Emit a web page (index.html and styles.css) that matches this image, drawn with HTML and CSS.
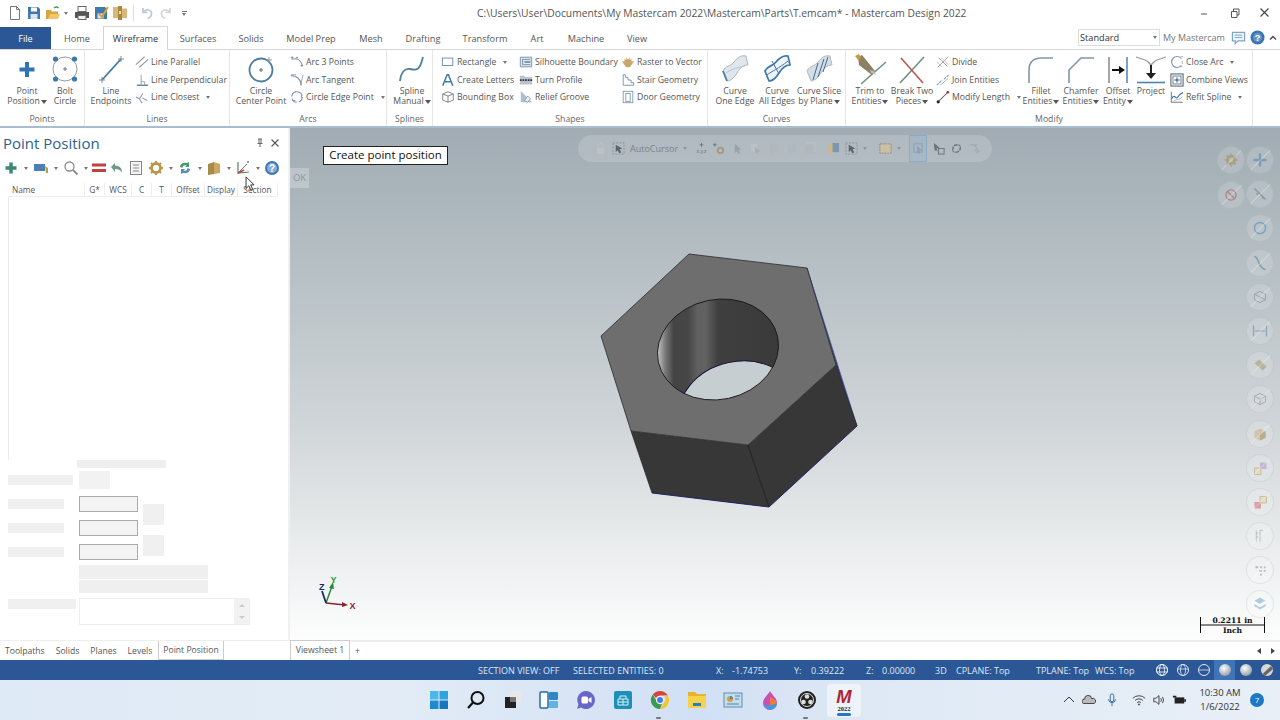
FILE: index.html
```html
<!DOCTYPE html>
<html>
<head>
  <meta charset="UTF-8">
  <title>Mastercam Design 2022</title>
  <link rel="stylesheet" href="styles.css">
</head>
<body>
  <div class="app">

    <!-- Title bar -->
    <header class="titlebar">
      <div class="qat">
        <svg class="qi" viewBox="0 0 16 16"><path d="M3.500 1.500h6l3 3v10h-9z" fill="#fff" stroke="#777"/><path d="M9.500 1.500v3h3" fill="none" stroke="#777"/></svg>
        <svg class="qi" viewBox="0 0 16 16"><path d="M2 2h10l2 2v10H2z" fill="#3f79ad"/><rect x="5" y="2.500" width="6" height="4" fill="#fff"/><rect x="4.500" y="9" width="7" height="5" fill="#dbe6ef"/></svg>
        <span class="qi-wide"><svg class="qi" viewBox="0 0 16 16"><path d="M1 5h5l1 1.500h6V14H1z" fill="#d9a441"/><path d="M3 14l2-5h10l-2 5z" fill="#efc66c"/><path d="M9 3c2-1.500 3.500-1 4.500 0" fill="none" stroke="#4c9a5a" stroke-width="1.500"/></svg><i class="caret"></i></span>
        <svg class="qi" viewBox="0 0 16 16"><rect x="4" y="1.500" width="8" height="5" fill="#fff" stroke="#666"/><path d="M1 7h14v6H1z" fill="#555"/><rect x="4" y="10.500" width="8" height="4" fill="#eee" stroke="#666"/></svg>
        <svg class="qi" viewBox="0 0 16 16"><path d="M2 2h10l2 2v10H2z" fill="#3f79ad"/><rect x="4.500" y="8.500" width="6" height="5" fill="#dbe6ef"/><path d="M6 9l3 3 6-10" fill="none" stroke="#d8a23a" stroke-width="2"/></svg>
        <svg class="qi" viewBox="0 0 16 16"><path d="M1 2h5l1 1.500h8V13H1z" fill="#d8b878"/><rect x="6" y="1" width="4" height="14" fill="#a8863f"/><rect x="7" y="6" width="2" height="3" fill="#f3e4bf"/></svg>
        <i class="qsep"></i>
        <svg class="qi" viewBox="0 0 16 16"><path d="M4 3v4.500h4.500M4.500 7C7 3.500 13 4.500 12.500 9c-.3 2.500-2 4-4 4.500" fill="none" stroke="#b9c9d8" stroke-width="1.700"/></svg>
        <svg class="qi" viewBox="0 0 16 16"><path d="M12 3v4.500H7.500M11.500 7C9 3.500 3 4.500 3.500 9c.3 2.500 2 4 4 4.500" fill="none" stroke="#d5d5d5" stroke-width="1.700"/></svg>
        <span class="qi-more"><b></b><i class="caret"></i></span>
      </div>
      <div class="doc-title">C:\Users\User\Documents\My Mastercam 2022\Mastercam\Parts\T.emcam* - Mastercam Design 2022</div>
      <div class="winbtns">
        <svg viewBox="0 0 12 12"><path d="M2 7h6" stroke="#555"/></svg>
        <svg viewBox="0 0 12 12"><path d="M2.500 4.500h5.500v6h-5.500zM4.500 4.500v-2.500h5.500v6h-2" fill="none" stroke="#555"/></svg>
        <svg viewBox="0 0 12 12"><path d="M1.500 1.500l8 8M9.500 1.500l-8 8" stroke="#444" stroke-width="1.100"/></svg>
      </div>
    </header>

    <!-- Ribbon tabs -->
    <nav class="tabs">
      <span class="tab-file">File</span>
      <span class="tab t-home">Home</span>
      <span class="tab tab-active">Wireframe</span>
      <span class="tab t-surfaces">Surfaces</span>
      <span class="tab t-solids">Solids</span>
      <span class="tab t-prep">Model Prep</span>
      <span class="tab t-mesh">Mesh</span>
      <span class="tab t-drafting">Drafting</span>
      <span class="tab t-transform">Transform</span>
      <span class="tab t-art">Art</span>
      <span class="tab t-machine">Machine</span>
      <span class="tab t-view">View</span>
      <div class="tabs-right">
        <div class="combo">Standard<i class="caret"></i></div>
        <span class="my-mc">My Mastercam</span>
        <svg class="tr-ic" viewBox="0 0 16 16"><path d="M1.500 2.500h13v9h-7l-3 3v-3h-3z" fill="#eef3f8" stroke="#7ea6c8" stroke-width="1.300"/><path d="M4 5.500h8M4 8h8" stroke="#7ea6c8"/></svg>
        <svg class="tr-ic" viewBox="0 0 16 16"><circle cx="8" cy="8" r="7.500" fill="#3d73ad"/><circle cx="8" cy="8" r="5" fill="#5f93c6"/><text x="8" y="11.500" class="help-q">?</text></svg>
        <svg class="tr-chev" viewBox="0 0 10 10"><path d="M2 6.500l3-3 3 3" fill="none" stroke="#444" stroke-width="1.300"/></svg>
      </div>
    </nav>

    <!-- Ribbon -->
    <section class="ribbon">
      <div class="rgroup g-points">
        <div class="rbody">
          <div class="big w42">
            <svg viewBox="0 0 36 32"><path d="M18 9v15M10.500 16.500h15" stroke="#2f75b5" stroke-width="4"/></svg>
            <span>Point<br>Position<i class="caret-big"></i></span>
          </div>
          <div class="big w30">
            <svg viewBox="0 0 36 32"><circle cx="18" cy="16" r="12" fill="none" stroke="#999"/><path d="M16 16h4M18 14v4" stroke="#777"/><circle cx="8.500" cy="6" r="2.600" fill="#3d78ad"/><circle cx="27.500" cy="6" r="2.600" fill="#3d78ad"/><circle cx="8.500" cy="26" r="2.600" fill="#3d78ad"/><circle cx="27.500" cy="26" r="2.600" fill="#3d78ad"/></svg>
            <span>Bolt<br>Circle</span>
          </div>
        </div>
        <div class="rlabel">Points</div>
      </div>

      <div class="rgroup g-lines">
        <div class="rbody">
          <div class="big w48">
            <svg viewBox="0 0 36 32"><path d="M9 27L28 6" stroke="#3f78a8" stroke-width="1.800"/><path d="M9 24v6M6 27h6M28 3v6M25 6h6" stroke="#888"/></svg>
            <span>Line<br>Endpoints</span>
          </div>
          <div class="col">
            <div class="small"><svg viewBox="0 0 16 16"><path d="M1 11L11 2M5 14L15 5" stroke="#8a9aa8" stroke-width="1.200"/></svg>Line Parallel</div>
            <div class="small"><svg viewBox="0 0 16 16"><path d="M2 14h13" stroke="#4c7fa8" stroke-width="1.500"/><path d="M7 2v12M7 10h4v4" fill="none" stroke="#999"/></svg>Line Perpendicular</div>
            <div class="small"><svg viewBox="0 0 16 16"><path d="M1 8l4 2 4-6M5 10l3 5M8 9l6 3" fill="none" stroke="#8a9aa8" stroke-width="1.200"/></svg>Line Closest<i class="caret"></i></div>
          </div>
        </div>
        <div class="rlabel">Lines</div>
      </div>

      <div class="rgroup g-arcs">
        <div class="rbody">
          <div class="big w56">
            <svg viewBox="0 0 36 32"><circle cx="18" cy="17" r="11.500" fill="none" stroke="#4f7f9f" stroke-width="1.800"/><path d="M16 17h4M18 15v4" stroke="#666"/><path d="M26 4v6M23 7h6" stroke="#999"/></svg>
            <span>Circle<br>Center Point</span>
          </div>
          <div class="col">
            <div class="small"><svg viewBox="0 0 16 16"><path d="M2 5c5-2 10 0 12 6" fill="none" stroke="#7b97ad" stroke-width="1.200"/><path d="M1 3h3M2.500 1.500v3M7 3h2M8 2v2M12 12h3M13.500 10.500v3" stroke="#888"/></svg>Arc 3 Points</div>
            <div class="small"><svg viewBox="0 0 16 16"><path d="M1 3c7 0 11 4 12 11" fill="none" stroke="#7b97ad" stroke-width="1.300"/><path d="M15 2l-3 12M1 2h6" stroke="#999"/></svg>Arc Tangent</div>
            <div class="small"><svg viewBox="0 0 16 16"><circle cx="8" cy="8" r="6" fill="none" stroke="#7b97ad" stroke-dasharray="7 2.500" stroke-width="1.300"/><path d="M6 2h3M13 6v3M3 12h3" stroke="#888"/></svg>Circle Edge Point<i class="caret"></i></div>
          </div>
        </div>
        <div class="rlabel">Arcs</div>
      </div>

      <div class="rgroup g-splines">
        <div class="rbody">
          <div class="big w42">
            <svg viewBox="0 0 36 32"><path d="M6 28c1-9 5-13 10-12s8 1 10-3 2-6 3-9" fill="none" stroke="#4f7f9f" stroke-width="1.800"/></svg>
            <span>Spline<br>Manual<i class="caret-big"></i></span>
          </div>
        </div>
        <div class="rlabel">Splines</div>
      </div>

      <div class="rgroup g-shapes">
        <div class="rbody">
          <div class="col c78">
            <div class="small"><svg viewBox="0 0 16 16"><rect x="1.500" y="3.500" width="12" height="8.500" fill="#fff" stroke="#5f86a6"/></svg>Rectangle<i class="caret"></i></div>
            <div class="small"><svg viewBox="0 0 16 16"><path d="M2 14.500L7 2h1.500l5 12.500M4 10h7" fill="none" stroke="#3f78a8" stroke-width="1.700"/></svg>Create Letters</div>
            <div class="small"><svg viewBox="0 0 16 16"><path d="M8 2l6 2.500v7L8 14l-6-2.500v-7zM2 4.500L8 7l6-2.500M8 7v7" fill="none" stroke="#777"/></svg>Bounding Box</div>
          </div>
          <div class="col c102">
            <div class="small"><svg viewBox="0 0 16 16"><path d="M1.500 2.500h13v11h-13z" fill="#dfe7ee" stroke="#6f8da5"/><path d="M13 5H4v6h9M13 7.500H6.500v1H13" fill="none" stroke="#6f8da5"/></svg>Silhouette Boundary</div>
            <div class="small"><svg viewBox="0 0 16 16"><path d="M1 3h5l1 1.500h8V13H1z" fill="#b9c4cc"/><path d="M1 8h14" stroke="#333" stroke-width="2" stroke-dasharray="2 1"/></svg>Turn Profile</div>
            <div class="small"><svg viewBox="0 0 16 16"><path d="M2 1v13h13z" fill="#aebfcd"/><path d="M6 12l4-5 3 3-3 4z" fill="#eef2f5" stroke="#7f95a8"/></svg>Relief Groove</div>
          </div>
          <div class="col">
            <div class="small"><svg viewBox="0 0 16 16"><path d="M3 10l-2-3 3 .5V4l2 2V2.500l2 3 2-3V6l2-2v3.500l3-.5-2 3-3 4H6z" fill="#c9a66b"/></svg>Raster to Vector</div>
            <div class="small"><svg viewBox="0 0 16 16"><path d="M2.500 2v12h12v-3h-3V8H8V5H5V2z" fill="#fff" stroke="#6f8da5"/></svg>Stair Geometry</div>
            <div class="small"><svg viewBox="0 0 16 16"><rect x="2.500" y="1.500" width="11" height="13" fill="#fff" stroke="#7a98ad"/><rect x="5.500" y="4" width="5" height="9" fill="none" stroke="#7a98ad"/></svg>Door Geometry</div>
          </div>
        </div>
        <div class="rlabel">Shapes</div>
      </div>

      <div class="rgroup g-curves">
        <div class="rbody">
          <div class="big w42">
            <svg viewBox="0 0 36 32"><path d="M6 18c3-6 7-4 11-9s7-7 12-6l2 9c-5 0-8 3-11 8s-7 8-10 8z" fill="#dfe6ec" stroke="#a9b7c2"/><path d="M6 18l4 10" stroke="#4f84ad" stroke-width="2"/><path d="M9 20c4-3 9-5 19-7" stroke="#b9c5ce" fill="none"/></svg>
            <span>Curve<br>One Edge</span>
          </div>
          <div class="big w42">
            <svg viewBox="0 0 36 32"><path d="M6 18c3-6 7-4 11-9s7-7 12-6l2 9c-5 0-8 3-11 8s-7 8-10 8z" fill="#eef3f7" stroke="#3f78a8" stroke-width="1.700"/><path d="M8 22c5-4 11-6 21-14M13 8l7 13" stroke="#3f78a8" fill="none"/></svg>
            <span>Curve<br>All Edges</span>
          </div>
          <div class="big w42">
            <svg viewBox="0 0 36 32"><path d="M6 18c3-6 7-4 11-9s7-7 12-6l2 9c-5 0-8 3-11 8s-7 8-10 8z" fill="#d5dde3" stroke="#b0bcc5"/><path d="M12 27l5-17M17 24l6-18M22 19l5-15" stroke="#3f6f98"/></svg>
            <span>Curve Slice<br>by Plane<i class="caret-big"></i></span>
          </div>
        </div>
        <div class="rlabel">Curves</div>
      </div>

      <div class="rgroup g-modify">
        <div class="rbody">
          <div class="big w42">
            <svg viewBox="0 0 36 32"><path d="M9 31L34 9" stroke="#6f9182" stroke-width="1.600"/><path d="M6 4l4-2 13 16-3 4-13-10z" fill="#8e8064"/><path d="M3 3l4-2 2 4-3 2z" fill="#c59b4a"/><path d="M18 17l4 1 2 4-5-2z" fill="#bbb"/></svg>
            <span>Trim to<br>Entities<i class="caret-big"></i></span>
          </div>
          <div class="big w42">
            <svg viewBox="0 0 36 32"><path d="M6 30L30 4" stroke="#6f9182" stroke-width="1.600"/><path d="M7 5l22 25" stroke="#c2544e" stroke-width="1.600"/></svg>
            <span>Break Two<br>Pieces<i class="caret-big"></i></span>
          </div>
          <div class="col c84">
            <div class="small"><svg viewBox="0 0 16 16"><path d="M2 14L14 2" stroke="#999"/><path d="M3 3l10 10" stroke="#c08a80"/><path d="M6 3l8 8M1 8l6 6" stroke="#bbb"/></svg>Divide</div>
            <div class="small"><svg viewBox="0 0 16 16"><path d="M1 14l6-6M9 7l6-5" stroke="#6f9aa8" stroke-width="1.200" stroke-dasharray="3 1"/><path d="M5 14l9-8" stroke="#aaa"/></svg>Join Entities</div>
            <div class="small"><svg viewBox="0 0 16 16"><path d="M2 14L14 2" stroke="#555" stroke-width="1.200"/><circle cx="2.500" cy="13.500" r="1.800" fill="#222"/><circle cx="13.500" cy="2.500" r="1.500" fill="#a33"/></svg>Modify Length<i class="caret"></i></div>
          </div>
          <div class="big w40">
            <svg viewBox="0 0 36 32"><path d="M6 30V17C6 9 11 5 19 5h11" fill="none" stroke="#7f98a8" stroke-width="1.600"/></svg>
            <span>Fillet<br>Entities<i class="caret-big"></i></span>
          </div>
          <div class="big w40">
            <svg viewBox="0 0 36 32"><path d="M6 30V17L18 5h13" fill="none" stroke="#7f98a8" stroke-width="1.600"/></svg>
            <span>Chamfer<br>Entities<i class="caret-big"></i></span>
          </div>
          <div class="big w34">
            <svg viewBox="0 0 36 32"><path d="M9 4v26" stroke="#888" stroke-width="1.500"/><path d="M27 4v26" stroke="#4f84ad" stroke-width="1.500"/><path d="M12 17h8" stroke="#111" stroke-width="2"/><path d="M19 13l6 4-6 4z" fill="#111"/></svg>
            <span>Offset<br>Entity<i class="caret-big"></i></span>
          </div>
          <div class="big w32">
            <svg viewBox="0 0 36 32"><path d="M3 4l9 3c3 1 4 3 6 5 2-2 3-4 6-5l9-3" fill="none" stroke="#999" stroke-width="1.300"/><path d="M18 12v11" stroke="#222" stroke-width="2"/><path d="M13 20l5 6 5-6z" fill="#222"/><path d="M4 29.500h28" stroke="#4f84ad" stroke-width="1.600"/></svg>
            <span>Project</span>
          </div>
          <div class="col c-last">
            <div class="small"><svg viewBox="0 0 16 16"><path d="M13 4a6.300 6.300 0 1 0 0 8" fill="none" stroke="#7b97ad" stroke-width="1.300"/><path d="M12 2h3M14 7v3M11 13h3" stroke="#999"/></svg>Close Arc<i class="caret"></i></div>
            <div class="small"><svg viewBox="0 0 16 16"><rect x="1" y="1" width="14" height="14" fill="#dfe9f1" stroke="#555"/><rect x="3.500" y="3.500" width="9" height="9" fill="#fff" stroke="#5f86a6"/><path d="M8 5v6M5 8h6" stroke="#333"/></svg>Combine Views</div>
            <div class="small"><svg viewBox="0 0 16 16"><path d="M1.500 14V2M1.500 14h13" stroke="#666"/><path d="M2 10c3-7 5 2 7-2s3-4 6-5" fill="none" stroke="#3f78a8" stroke-width="1.300"/><path d="M4 13c3-3 6-1 10-5" fill="none" stroke="#aaa"/></svg>Refit Spline<i class="caret"></i></div>
          </div>
        </div>
        <div class="rlabel">Modify</div>
      </div>
    </section>

    <!-- Panel and graphics window -->
    <main class="workspace">
      <aside class="panel">
        <div class="panel-head">
          <h1>Point Position</h1>
          <svg class="ph-ic" viewBox="0 0 10 10"><path d="M3 1h4M4 1v4M6 1v4M2.500 5.500h5M5 5.500V9" fill="none" stroke="#666"/></svg>
          <svg class="ph-ic" viewBox="0 0 10 10"><path d="M1.500 1.500l7 7M8.500 1.500l-7 7" stroke="#555" stroke-width="1.100"/></svg>
        </div>

        <div class="panel-tools">
          <span class="tb"><svg viewBox="0 0 16 16"><path d="M8 2.500v11M2.500 8h11" stroke="#3d8a6f" stroke-width="3.500"/></svg><i class="tb-caret"></i></span>
          <span class="tb"><svg viewBox="0 0 16 16"><path d="M1 4h11v7H1z" fill="#4d7fb5"/><path d="M12 6l3 2v5h-2z" fill="#b9a33a"/></svg><i class="tb-caret"></i></span>
          <span class="tb t28"><svg viewBox="0 0 16 16"><circle cx="6.500" cy="6.500" r="4.500" fill="#fff" stroke="#8a8a8a" stroke-width="1.300"/><path d="M10 10l4.500 4.500" stroke="#8a8a8a" stroke-width="1.800"/></svg><i class="tb-caret"></i></span>
          <span class="tb t18"><svg viewBox="0 0 16 16"><path d="M1 5h14M1 10.500h14" stroke="#c0413e" stroke-width="2.800"/></svg></span>
          <span class="tb t19"><svg viewBox="0 0 16 16"><path d="M2 7l4-4v2.500c5 0 7 3 7 7-2-3-4-3.500-7-3.500V12z" fill="#6f9a8a"/></svg></span>
          <span class="tb t20"><svg viewBox="0 0 16 16"><rect x="2.500" y="1.500" width="11" height="13" fill="#f4f4f4" stroke="#888"/><path d="M5 5h6M5 8h6M5 11h6" stroke="#888"/></svg></span>
          <span class="tb t29"><svg viewBox="0 0 16 16"><circle cx="8" cy="8" r="4.500" fill="none" stroke="#b9974a" stroke-width="2.800"/><path d="M8 1v2M8 13v2M1 8h2M13 8h2M3 3l1.500 1.500M13 13l-1.500-1.500M13 3l-1.500 1.500M3 13l1.500-1.500" stroke="#b9974a" stroke-width="2"/></svg><i class="tb-caret"></i></span>
          <span class="tb t29"><svg viewBox="0 0 16 16"><path d="M3 7c0-3 3-5 7-4l2-1v5H8l1.500-1.500C7 5 5.500 6 5.500 8z" fill="#4c9a6a"/><path d="M13 9c0 3-3 5-7 4l-2 1V9h4l-1.500 1.500c2.500.5 4-.5 4-2.500z" fill="#5f8db5"/></svg><i class="tb-caret"></i></span>
          <span class="tb t29"><svg viewBox="0 0 16 16"><path d="M2 4l6-2v12l-6 1z" fill="#a88a4a"/><path d="M8 2l6 2v9l-6 1z" fill="#c9a961"/></svg><i class="tb-caret"></i></span>
          <span class="tb t29"><svg viewBox="0 0 16 16"><path d="M3 2v11l11-1" fill="none" stroke="#5f8068" stroke-width="1.200"/><path d="M3 13l9-9" stroke="#777"/><path d="M3 13l6-3" stroke="#c0413e" stroke-width="1.400"/><path d="M12 2h2M13 1v2" stroke="#777"/></svg><i class="tb-caret"></i></span>
          <span class="tb t16"><svg viewBox="0 0 16 16"><circle cx="8" cy="8" r="7" fill="#4078b5"/><circle cx="8" cy="8" r="5" fill="#86b0d8"/><text x="8" y="11.500" class="help-q">?</text></svg></span>
        </div>

        <div class="grid-head">
          <span class="gh-name">Name</span><span class="gh-g">G*</span><span class="gh-wcs">WCS</span><span class="gh-c">C</span><span class="gh-t">T</span><span class="gh-offset">Offset</span><span class="gh-display">Display</span><span class="gh-section">Section</span>
        </div>
        <div class="grid-body"></div>

        <!-- Form rows: captured mid-fade, so the content shows as blank boxes -->
        <div class="fade-form">
          <div class="ff-title"></div>
          <div class="ff-row ff-first">
            <div class="ff-label ff-l65"></div>
            <div class="ff-box"></div>
          </div>
          <div class="ff-fields">
            <div class="ff-col">
              <div class="ff-row"><div class="ff-label"></div><div class="ff-input"></div></div>
              <div class="ff-row"><div class="ff-label"></div><div class="ff-input"></div></div>
              <div class="ff-row"><div class="ff-label"></div><div class="ff-input"></div></div>
            </div>
            <div class="ff-squares"><div class="ff-sq"></div><div class="ff-sq"></div></div>
          </div>
          <div class="ff-bars"><div></div><div></div></div>
          <div class="ff-row ff-note">
            <div class="ff-label ff-l68"></div>
            <div class="ff-text">
              <div class="ff-scroll"><i class="up"></i><i class="down"></i></div>
            </div>
          </div>
        </div>

        <svg class="cursor" viewBox="0 0 12 18"><path d="M1 1v13l3.200-3 2.300 5 2-1-2.300-5H10z" fill="#fff" stroke="#222"/></svg>
      </aside>

      <div class="viewport">
        <svg class="nut" viewBox="290 128 990 512">
          <defs>
            <clipPath id="hole"><ellipse cx="718" cy="349.500" rx="61" ry="50" transform="rotate(-12 718 349.500)"/></clipPath>
            <linearGradient id="wall" gradientUnits="userSpaceOnUse" x1="658" y1="0" x2="778" y2="0">
              <stop offset="0" stop-color="#c0c0c0"/>
              <stop offset=".06" stop-color="#7a7a7a"/>
              <stop offset=".13" stop-color="#444"/>
              <stop offset=".25" stop-color="#474747"/>
              <stop offset=".33" stop-color="#606060"/>
              <stop offset=".4" stop-color="#616161"/>
              <stop offset=".5" stop-color="#3f3f3f"/>
              <stop offset="1" stop-color="#3a3a3a"/>
            </linearGradient>
          </defs>
          <path d="M807 268L857 426 836 365z" fill="#2e2e3c" stroke="#5060b0" stroke-width=".8"/>
          <path d="M748 445L836 365 857 426 769 507z" fill="#373737"/>
          <path d="M631 431L748 445 769 507 652 493z" fill="#373737"/>
          <path d="M689 254L807 268 836 365 748 445 631 431 601 336z" fill="#6e6e6e" stroke="#2a2a2a" stroke-width=".8"/>
          <path d="M748 445L769 507" stroke="#111" stroke-width=".8"/>
          <path d="M652 493L769 507 857 426" fill="none" stroke="#22226a" stroke-width="1"/>
          <path d="M631 431L652 493M836 365L857 426" fill="none" stroke="#222" stroke-width=".7"/>
          <g clip-path="url(#hole)">
            <rect x="650" y="290" width="140" height="120" fill="url(#wall)"/>
            <ellipse cx="739" cy="411.500" rx="61" ry="50" transform="rotate(-12 739 411.500)" fill="#c7ced2" stroke="#1a1a3a"/>
          </g>
          <ellipse cx="718" cy="349.500" rx="61" ry="50" transform="rotate(-12 718 349.500)" fill="none" stroke="#1a1a1a" stroke-width=".9"/>
          <!-- Axis triad -->
          <path d="M326 603L345 605" stroke="#8a2030" stroke-width="1.500"/>
          <path d="M342 602l6 3-6 2z" fill="#8a2030"/>
          <path d="M326 603L332 586" stroke="#2a8a3a" stroke-width="1.500"/>
          <path d="M329 588l4-6 1 7z" fill="#2a8a3a"/>
          <path d="M326 603L322 591" stroke="#1a2a6a" stroke-width="1.800"/>
          <text x="349.500" y="609" class="ax ax-x">X</text>
          <text x="330.500" y="583" class="ax ax-y">Y</text>
          <text x="319" y="590" class="ax ax-z">Z</text>
          <!-- Scale -->
          <path d="M1200.500 617v16M1264.500 617v16M1200 625h65" stroke="#111" fill="none"/>
          <text x="1232.500" y="623" class="scale-text">0.2211 in</text>
          <text x="1232.500" y="632.500" class="scale-text">Inch</text>
        </svg>

        <div class="tooltip">Create point position</div>
        <div class="ok-btn">OK</div>

        <div class="autocursor">
          <svg viewBox="0 0 14 14"><rect x="3" y="6" width="8" height="7" fill="#bcc3c8"/><path d="M4.500 6V4a2.500 2.500 0 0 1 5 0v2" fill="none" stroke="#bcc3c8"/></svg>
          <svg viewBox="0 0 14 14"><path d="M1 1h12v12H1z" fill="none" stroke="#8a9298" stroke-dasharray="2 1.500"/><path d="M4 3l7 4-3 1 2 3-2 1-2-3-2 2z" fill="#5c6369"/></svg>
          <span>AutoCursor</span><i class="caret"></i>
          <svg viewBox="0 0 14 14"><text x="7" y="12" class="ac-xyz">x.y.z</text><path d="M7 1v4M5 3h4" stroke="#6a7278"/></svg>
          <svg viewBox="0 0 14 14"><circle cx="8" cy="9" r="3" fill="none" stroke="#a89878" stroke-width="2"/><path d="M2 1v4M0 3h4" stroke="#6a7278"/></svg>
          <svg viewBox="0 0 14 14"><path d="M4 2l7 6-3 1 2 3-2 1-2-3-2 2z" fill="#9aa3a9"/></svg>
          <svg viewBox="0 0 14 14"><rect x="2" y="2" width="7" height="8" fill="#bcc3c8"/><path d="M6 5l6 5-3 1 1 2-2-1-1 1z" fill="#a8b0b6"/></svg>
          <svg viewBox="0 0 14 14"><path d="M3 2h4v10H3zM8 4h3v6H8z" fill="#b0b8be"/></svg>
          <svg viewBox="0 0 14 14"><path d="M3 4h4v8H3zM8 2h3v8H8z" fill="#b0b8be"/></svg>
          <svg viewBox="0 0 14 14"><rect x="2" y="3" width="9" height="9" fill="#b0b8be"/><path d="M4 3V1h9v9h-2" fill="none" stroke="#bcc3c8"/></svg>
          <svg class="ac-globe" viewBox="0 0 14 14"><rect x="1" y="3" width="7" height="9" fill="#c9b88f"/><rect x="6" y="1" width="7" height="10" fill="#7d97b0"/></svg>
          <svg viewBox="0 0 14 14"><path d="M1 1h12v12H1z" fill="none" stroke="#8a9298" stroke-dasharray="2 1.500"/><path d="M4 3l7 4-3 1 2 3-2 1-2-3-2 2z" fill="#5c6369"/></svg><i class="caret"></i>
          <svg class="ac-wide" viewBox="0 0 14 14"><rect x="1" y="2" width="12" height="10" fill="#c9c1a5" stroke="#8f8a78" stroke-dasharray="2 1"/></svg><i class="caret"></i>
          <span class="ac-active"><svg viewBox="0 0 14 14"><rect x="2" y="2" width="9" height="9" fill="none" stroke="#8fa0ae"/><path d="M5 4l6 5-3 1 1 3-2-1-1 1z" fill="#8fa0ae"/></svg></span>
          <svg viewBox="0 0 14 14"><path d="M2 1l6 5-3 1 1 3-2-1-1 1z" fill="#6a7278"/><rect x="7" y="7" width="6" height="6" fill="none" stroke="#6a7278"/></svg>
          <svg viewBox="0 0 14 14"><path d="M3 9a5 5 0 0 1 8-5M11 5a5 5 0 0 1-8 5" fill="none" stroke="#6a7278" stroke-width="1.500" stroke-dasharray="4 1"/></svg>
          <svg viewBox="0 0 14 14"><path d="M2 3h8M7 3l5 8M7 8l3 4" stroke="#a2aab0" stroke-width="1.300" fill="none"/></svg>
        </div>

        <!-- Right-hand quick mask buttons -->
        <div class="rail">
          <div class="rail-top">
            <span class="mask"><svg viewBox="0 0 28 28"><circle cx="14" cy="14" r="4" fill="none" stroke="#a89060" stroke-width="3"/><path d="M14 7v2M14 19v2M7 14h2M19 14h2M9 9l1.500 1.500M19 19l-1.500-1.500M19 9l-1.500 1.500M9 19l1.500-1.500" stroke="#a89060" stroke-width="1.500"/></svg></span>
            <span class="mask"><svg viewBox="0 0 28 28"><circle cx="14" cy="14" r="5.500" fill="none" stroke="#b06a6a" stroke-width="1.500"/><path d="M10 10l8 8" stroke="#b06a6a" stroke-width="1.500"/></svg></span>
          </div>
          <div class="rail-main">
            <span class="mask"><svg viewBox="0 0 28 28"><path d="M14 7v14M7 14h14" stroke="#5f8db5" stroke-width="2.500"/></svg></span>
            <span class="mask"><svg viewBox="0 0 28 28"><path d="M8 8l12 12M10 14h2M16 18h2" stroke="#6f8596" stroke-width="1.500"/></svg></span>
            <span class="mask"><svg viewBox="0 0 28 28"><circle cx="14" cy="14" r="6" fill="none" stroke="#5f8db5" stroke-width="1.500"/></svg></span>
            <span class="mask"><svg viewBox="0 0 28 28"><path d="M8 7c5 0 4 14 12 14" fill="none" stroke="#5f8596" stroke-width="1.500"/></svg></span>
            <span class="mask"><svg viewBox="0 0 28 28"><path d="M14 8l6 3v6l-6 3-6-3v-6zM8 11l12 6" fill="none" stroke="#7f8c96"/></svg></span>
            <span class="mask"><svg viewBox="0 0 28 28"><path d="M7 8v12M21 8v12M8 14h12" stroke="#6f8fa8" stroke-width="1.300"/></svg></span>
            <span class="mask"><svg viewBox="0 0 28 28"><path d="M8 12l5-4 8 8-4 4z" fill="#b0a07a"/></svg></span>
            <span class="mask"><svg viewBox="0 0 28 28"><path d="M14 8l6 3v6l-6 3-6-3v-6zM8 11l6 3 6-3M14 14v6" fill="none" stroke="#8a949c"/></svg></span>
            <span class="mask"><svg viewBox="0 0 28 28"><path d="M14 8l6 3v7l-6 3-6-3v-7z" fill="#cdb98f"/><path d="M14 14l6-3v7l-6 3z" fill="#a8945f"/></svg></span>
            <span class="mask"><svg viewBox="0 0 28 28"><rect x="8" y="14" width="7" height="7" fill="#e6d6b0" stroke="#b9a77a"/><rect x="14" y="8" width="7" height="7" fill="#b5a0cc"/></svg></span>
            <span class="mask"><svg viewBox="0 0 28 28"><rect x="8" y="14" width="7" height="7" fill="#d9737f"/><rect x="14" y="8" width="7" height="7" fill="#e6d6b0" stroke="#b9a77a"/></svg></span>
            <span class="mask"><svg viewBox="0 0 28 28"><path d="M10 8v12M17 8h-3v12" fill="none" stroke="#9aa3aa"/><path d="M10 11h2M10 15h2" stroke="#9aa3aa"/></svg></span>
            <span class="mask"><svg viewBox="0 0 28 28"><path d="M9 10h3v2H9zM14 10h2v2h-2zM18 10h2v2h-2zM13 14h3v2h-3zM18 14h2v2h-2zM14 18h2v2h-2z" fill="#9aa3aa"/></svg></span>
            <span class="mask"><svg viewBox="0 0 28 28"><path d="M14 7l6 3.500-6 3.500-6-3.500z" fill="#8db5d0"/><path d="M8 14l6 3.500 6-3.500v2.500L14 20l-6-3.500z" fill="#8db5d0"/></svg></span>
          </div>
        </div>
      </div>
    </main>

    <!-- Manager and viewsheet tabs -->
    <div class="bottom-tabs">
      <div class="mgr-tabs">
        <span>Toolpaths</span><span>Solids</span><span>Planes</span><span>Levels</span><span class="mgr-active">Point Position</span>
      </div>
      <div class="sheet-tabs">
        <span class="sheet">Viewsheet 1</span><span class="sheet-add">+</span>
        <svg class="sheet-arrows" viewBox="0 0 22 10"><path d="M6 2L2 5l4 3zM16 2l4 3-4 3z" fill="#444"/></svg>
      </div>
    </div>

    <!-- Status bar -->
    <footer class="status">
      <span class="s-section">SECTION VIEW: OFF</span>
      <span class="s-selected">SELECTED ENTITIES: 0</span>
      <span class="s-x">X:</span><span class="s-xv">-1.74753</span>
      <span class="s-y">Y:</span><span class="s-yv">0.39222</span>
      <span class="s-z">Z:</span><span class="s-zv">0.00000</span>
      <span class="s-3d">3D</span>
      <span class="s-cp">CPLANE: Top</span>
      <span class="s-tp">TPLANE: Top</span>
      <span class="s-wcs">WCS: Top</span>
      <div class="s-icons">
        <span><svg viewBox="0 0 14 14"><circle cx="7" cy="7" r="5.500" fill="none" stroke="#fff"/><ellipse cx="7" cy="7" rx="2.500" ry="5.500" fill="none" stroke="#fff" stroke-width=".8"/><path d="M1.500 5h11M1.500 9h11" stroke="#fff" stroke-width=".8"/></svg></span>
        <span><svg viewBox="0 0 14 14"><circle cx="7" cy="7" r="5.500" fill="none" stroke="#dfe8f2"/><ellipse cx="7" cy="7" rx="2.500" ry="5.500" fill="none" stroke="#dfe8f2" stroke-width=".8"/><path d="M1.500 6h11" stroke="#dfe8f2" stroke-width=".8"/></svg></span>
        <span><svg viewBox="0 0 14 14"><circle cx="7" cy="7" r="5.500" fill="none" stroke="#dfe8f2"/><path d="M1.500 7h11" stroke="#dfe8f2" stroke-width=".8"/></svg></span>
        <span class="s-on"><svg viewBox="0 0 14 14"><defs><radialGradient id="ball" cx=".4" cy=".35" r=".7"><stop offset="0" stop-color="#fff"/><stop offset="1" stop-color="#8f9aa5"/></radialGradient></defs><circle cx="7" cy="7" r="6" fill="url(#ball)"/></svg></span>
        <span><svg viewBox="0 0 14 14"><circle cx="7" cy="7" r="6" fill="url(#ball)"/></svg></span>
        <span><svg viewBox="0 0 14 14"><circle cx="7" cy="7" r="6" fill="#d8d8d8"/><path d="M2.500 11L11 3l2 3-8 7z" fill="#666"/></svg></span>
      </div>
    </footer>

    <!-- Windows taskbar -->
    <div class="taskbar">
      <div class="task-apps">
        <svg viewBox="0 0 20 20"><path d="M1 1h8.500v8.500H1z" fill="#4cb8ea"/><path d="M10.500 1H19v8.500h-8.500z" fill="#2ea3e0"/><path d="M1 10.500h8.500V19H1z" fill="#1e8bd0"/><path d="M10.500 10.500H19V19h-8.500z" fill="#1577bd"/></svg>
        <svg viewBox="0 0 20 20"><circle cx="11.500" cy="8" r="6" fill="none" stroke="#111" stroke-width="2"/><path d="M7 12.500l-5 5.500" stroke="#111" stroke-width="2.200"/></svg>
        <svg viewBox="0 0 20 20"><rect x="7" y="1" width="11" height="11" fill="#e8e8e8"/><rect x="2" y="7" width="11" height="11" fill="#222"/><rect x="7" y="7" width="6" height="5" fill="#777"/></svg>
        <svg viewBox="0 0 20 20"><rect x="1" y="2" width="8" height="16" rx="1" fill="#fff" stroke="#1d6fa8" stroke-width="1.500"/><rect x="10" y="2" width="9" height="8" rx="1" fill="#2e86c8"/><rect x="10" y="11" width="9" height="7" rx="1" fill="#5fb4e6"/></svg>
        <svg viewBox="0 0 20 20"><path d="M10 1a9 9 0 1 1-5 16.500L1 19l1.500-4.500A9 9 0 0 1 10 1z" fill="#6a66c8"/><rect x="5.500" y="6.500" width="6.500" height="7" rx="1.500" fill="#fff"/><path d="M12.500 9l3-2v6l-3-2z" fill="#fff"/></svg>
        <svg viewBox="0 0 20 20"><rect x="1" y="1" width="18" height="18" rx="2" fill="#1d91b5"/><path d="M5 9h10v6H5zM7 9V6h6v3" fill="none" stroke="#d5f0f8"/><path d="M10 9v6M5 12h10" stroke="#d5f0f8"/></svg>
        <svg viewBox="0 0 20 20"><path d="M10 1a9 9 0 0 1 7.800 4.500H10a4.500 4.500 0 0 0-4 2.500L2.800 4.500A9 9 0 0 1 10 1z" fill="#d9443a"/><path d="M17.800 5.500A9 9 0 0 1 10 19l4-6.500a4.500 4.500 0 0 0 0-7z" fill="#f5c52f"/><path d="M10 19A9 9 0 0 1 2.800 4.500L6 10a4.500 4.500 0 0 0 6 4z" fill="#3c9a4e"/><circle cx="10" cy="10" r="3.600" fill="#3f7fd8" stroke="#fff"/></svg>
        <svg viewBox="0 0 20 20"><path d="M1 2h7l2 2h9v14H1z" fill="#e6b32e"/><path d="M1 6h18v12H1z" fill="#f7d34c"/><rect x="6" y="13" width="8" height="3" fill="#2c7cc4"/></svg>
        <svg viewBox="0 0 20 20"><rect x="1" y="3" width="18" height="14" fill="#c7dbe8" stroke="#5f8fb0"/><circle cx="7" cy="9" r="3" fill="#e09a3a"/><path d="M7 9V6a3 3 0 0 1 3 3z" fill="#3c8ac0"/><path d="M12 6h5M12 9h4M4 14h12" stroke="#3c8ac0"/></svg>
        <svg viewBox="0 0 20 20"><path d="M10 1c2 4 7 7 7 12a7 7 0 0 1-14 0c0-5 5-8 7-12z" fill="#c94fb8"/><path d="M10 7c3 2 7 3 7 6a7 7 0 0 1-7 6z" fill="#f07a3a"/><path d="M3.500 15A7 7 0 0 0 17 13c-4 2-9 3-13.500 2z" fill="#3c9ae0"/></svg>
        <svg viewBox="0 0 20 20"><circle cx="10" cy="10" r="9" fill="#222"/><circle cx="10" cy="10" r="6.500" fill="none" stroke="#ddd"/><circle cx="10" cy="6.500" r="2.300" fill="#ddd"/><circle cx="6.500" cy="12" r="2.300" fill="#ddd"/><circle cx="13.500" cy="12" r="2.300" fill="#ddd"/></svg>
        <span class="task-active"><svg viewBox="0 0 24 24"><text x="12" y="15" class="mc-m">M</text><text x="12" y="22" class="mc-year">2022</text></svg></span>
      </div>
      <i class="dot dot-chrome"></i><i class="dot dot-obs"></i>
      <div class="tray">
        <svg viewBox="0 0 14 14"><path d="M2 9l5-5 5 5" fill="none" stroke="#333"/></svg>
        <svg class="tray-cloud" viewBox="0 0 16 14"><path d="M2 11a2.500 2.500 0 0 1 1-5 4 4 0 0 1 8-.5 3 3 0 0 1 3 5.500z" fill="#bbb" stroke="#333"/></svg>
        <svg class="tray-mic" viewBox="0 0 14 16"><rect x="5" y="1" width="4" height="9" rx="2" fill="none" stroke="#2a5f9a"/><path d="M3 7a4 4 0 0 0 8 0M7 11v4" fill="none" stroke="#2a5f9a"/></svg>
        <svg class="tray-wifi" viewBox="0 0 16 14"><path d="M1 5a10 10 0 0 1 14 0M3.500 7.500a6.500 6.500 0 0 1 9 0M5.800 10a3 3 0 0 1 4.400 0" fill="none" stroke="#333"/><circle cx="8" cy="12" r="1" fill="#333"/></svg>
        <svg class="tray-vol" viewBox="0 0 16 14"><path d="M2 5h2.500L8 2v10L4.500 9H2z" fill="none" stroke="#333"/><path d="M10 5a3 3 0 0 1 0 4M12 3.500a6 6 0 0 1 0 7" fill="none" stroke="#333"/></svg>
        <svg class="tray-bat" viewBox="0 0 16 14"><rect x="3" y="4" width="11" height="7" fill="#222"/><path d="M1 2h4v2H1zM14 6h2v3h-2z" fill="#222"/></svg>
        <div class="clock">10:30 AM<br>1/6/2022</div>
        <span class="badge">7</span>
      </div>
    </div>

  </div>
</body>
</html>
```

FILE: styles.css
```css
/* Mastercam window */
* { box-sizing: border-box; }
html, body { margin: 0; height: 100%; }
body {
  font-family: "Open Sans", "Noto Sans", sans-serif;
  font-size: 8.7px;
  color: #555;
  background: #fff;
  overflow: hidden;
}
.app { width: 1280px; height: 720px; display: flex; flex-direction: column; }
svg { display: block; flex: none; }

.caret {
  display: inline-block;
  width: 0;
  height: 0;
  margin-left: 5px;
  border-left: 2px solid transparent;
  border-right: 2px solid transparent;
  border-top: 3px solid #777;
  vertical-align: middle;
}
.caret-big {
  display: inline-block;
  width: 0;
  height: 0;
  margin-left: 1px;
  border-left: 3.5px solid transparent;
  border-right: 3.5px solid transparent;
  border-top: 4px solid #555;
  vertical-align: middle;
}
.help-q { font: bold 10px "Liberation Sans", sans-serif; fill: #fff; text-anchor: middle; }

/* Title bar */
.titlebar { height: 26px; display: flex; align-items: center; position: relative; }
.qat { display: flex; align-items: center; padding-left: 7px; gap: 3px; }
.qi { width: 16px; height: 16px; }
.qi-wide { display: flex; align-items: center; width: 26px; }
.qi-wide .caret { margin-left: 3px; }
.qsep { width: 1px; height: 16px; background: #ddd; margin: 0 2px; }
.qi-more { display: flex; flex-direction: column; align-items: center; gap: 1px; width: 14px; }
.qi-more b { width: 5px; height: 1px; background: #777; }
.qi-more .caret { margin: 0; }
.doc-title {
  position: absolute;
  left: 477px;
  top: 6px;
  font-size: 10.3px;
  line-height: 14px;
  white-space: nowrap;
  color: #555;
}
.winbtns { margin-left: auto; display: flex; gap: 18px; padding-right: 9px; }
.winbtns svg { width: 12px; height: 12px; }

/* Ribbon tabs */
.tabs { height: 24px; display: flex; align-items: stretch; font-size: 9.2px; border-bottom: 1px solid #d5d5d5; }
.tab-file {
  width: 51px;
  background: #2b5797;
  color: #fff;
  text-align: center;
  line-height: 24px;
  margin-top: 1px;
}
.tab { line-height: 25px; text-align: center; color: #555; }
.t-home { width: 52px; }
.tab-active {
  width: 65px;
  background: #fff;
  color: #333;
  border: 1px solid #d5d5d5;
  border-bottom: 0;
  height: 24px;
  line-height: 23px;
}
.t-surfaces { width: 60px; }
.t-solids { width: 46px; }
.t-prep { width: 74px; }
.t-mesh { width: 46px; }
.t-drafting { width: 58px; }
.t-transform { width: 66px; }
.t-art { width: 38px; }
.t-machine { width: 60px; }
.t-view { width: 42px; }
.tabs-right { margin-left: auto; display: flex; align-items: center; }
.combo {
  width: 82px;
  height: 17px;
  margin-right: 3px;
  padding-left: 1px;
  border: 1px solid #ddd;
  color: #333;
  line-height: 15px;
  position: relative;
}
.combo .caret { position: absolute; right: 2px; top: 6px; }
.my-mc { width: 68px; color: #777; font-size: 9px; }
.tr-ic { width: 15px; height: 15px; margin-right: 4px; }
.tr-ic + .tr-ic { margin-right: 1px; }
.tr-chev { width: 10px; height: 10px; margin: 0 2px; }

/* Ribbon */
.ribbon { height: 78px; display: flex; border-bottom: 2px solid #a9bdd0; }
.rgroup { display: flex; flex-direction: column; border-right: 1px solid #e6e6e6; }
.rbody { height: 62px; flex: none; display: flex; }
.rlabel { flex: none; text-align: center; line-height: 14px; font-size: 8.7px; color: #666; }
.g-points { width: 85px; }
.g-points .rbody { padding-left: 6px; gap: 2px; }
.g-lines { width: 145px; }
.g-lines .rbody { padding-left: 2px; }
.g-arcs { width: 157px; }
.g-arcs .rbody { padding-left: 3px; gap: 1px; }
.g-splines { width: 46px; }
.g-splines .rbody { padding-left: 4px; }
.g-shapes { width: 275px; }
.g-shapes .rbody { padding-left: 8px; }
.g-curves { width: 138px; }
.g-curves .rbody { padding-left: 6px; }
.g-modify { width: 407px; }
.g-modify .rbody { padding-left: 3px; }

.big { flex: none; display: flex; flex-direction: column; align-items: center; padding-top: 3px; text-align: center; line-height: 10px; white-space: nowrap; }
.big svg { width: 36px; height: 32px; margin-bottom: 1px; }
.w30 { width: 30px; }
.w32 { width: 32px; }
.w34 { width: 34px; }
.w40 { width: 40px; }
.w42 { width: 42px; }
.w48 { width: 48px; }
.w56 { width: 56px; }

.col { padding-top: 3.500px; }
.c78 { width: 78px; }
.c102 { width: 102px; }
.c84 { width: 85px; margin-left: 3px; }
.c-last { margin-left: 3px; }
.small { height: 17.5px; display: flex; align-items: center; gap: 2px; white-space: nowrap; }
.small svg { width: 14px; height: 14px; }
.small .caret { margin-left: 5px; }

/* Workspace */
.workspace { height: 512px; display: flex; }

.panel { width: 290px; flex: none; position: relative; border-right: 2px solid #f0f0f0; }
.panel-head { height: 30px; display: flex; align-items: center; padding: 0 8px 0 3px; }
.panel-head h1 { margin: 0 auto 0 0; font-size: 15px; font-weight: 400; color: #2d5f8f; }
.ph-ic { width: 10px; height: 10px; margin-left: 5px; }

.panel-tools { height: 20px; display: flex; align-items: center; padding-left: 3px; }
.tb { display: flex; align-items: center; flex: none; width: 30px; }
.tb svg { width: 16px; height: 16px; }
.tb-caret { width: 13px; height: 0; position: relative; }
.tb-caret::after {
  content: "";
  position: absolute;
  left: 5px;
  top: -1px;
  border-left: 2px solid transparent;
  border-right: 2px solid transparent;
  border-top: 3px solid #777;
}
.t16 { width: 16px; }
.t18 { width: 18px; }
.t19 { width: 19px; }
.t20 { width: 20px; }
.t28 { width: 28px; }
.t29 { width: 29px; }

.grid-head { margin: 5px 0 0 8px; width: 270px; height: 14px; display: flex; font-size: 8.3px; line-height: 14px; color: #555; border-bottom: 1px solid #eee; }
.grid-head span { text-align: center; border-right: 1px solid #eee; flex: none; }
.grid-head .gh-name { width: 77px; text-align: left; padding-left: 4px; }
.gh-g { width: 20px; }
.gh-wcs { width: 27px; }
.gh-c { width: 20px; }
.gh-t { width: 20px; }
.gh-offset { width: 33px; }
.gh-display { width: 33px; }
.gh-section { width: 40px; border-right: 0; }
.grid-body { margin-left: 8px; height: 263px; border-left: 1px solid #eaeaea; }

/* Faded options form */
.fade-form { padding-left: 8px; }
.ff-title { width: 89px; height: 8px; margin-left: 69px; background: #efefef; }
.ff-row { display: flex; align-items: center; }
.ff-first { margin-top: 3px; height: 18px; }
.ff-label { width: 56px; height: 10px; background: #f0f0f0; margin-right: 15px; }
.ff-l65 { width: 65px; margin-right: 6px; }
.ff-l68 { width: 68px; margin-right: 3px; }
.ff-box { width: 31px; height: 18px; background: #f2f2f2; }
.ff-fields { display: flex; margin-top: 7px; }
.ff-col { display: flex; flex-direction: column; gap: 8px; }
.ff-input { width: 59px; height: 16px; border: 1px solid #aaa; background: #f4f4f4; }
.ff-squares { display: flex; flex-direction: column; gap: 10px; margin: 8px 0 0 5px; }
.ff-sq { width: 21px; height: 21px; background: #f0f0f0; }
.ff-bars { margin: 5px 0 0 71px; display: flex; flex-direction: column; gap: 1px; }
.ff-bars div { width: 129px; height: 13.500px; background: #efefef; }
.ff-note { margin-top: 5px; align-items: flex-start; }
.ff-note .ff-label { margin-top: 1px; }
.ff-text { width: 171px; height: 27px; border: 1px solid #eee; display: flex; justify-content: flex-end; }
.ff-scroll { width: 15px; background: #f2f2f2; display: flex; flex-direction: column; justify-content: space-between; align-items: center; padding: 5px 0; }
.ff-scroll i { width: 0; height: 0; border-left: 3px solid transparent; border-right: 3px solid transparent; }
.ff-scroll .up { border-bottom: 3px solid #ccc; }
.ff-scroll .down { border-top: 3px solid #ccc; }

.cursor { position: absolute; left: 245px; top: 48px; width: 11px; height: 16px; }

/* Graphics window */
.viewport {
  flex: 1;
  position: relative;
  background: linear-gradient(#a0abb3 0%, #b4bec3 25%, #d0d5d8 58%, #e6e9ea 78%, #fdfdfd 100%);
  overflow: hidden;
}
.nut { position: absolute; left: 0; top: 0; width: 990px; height: 512px; }
.ax { font: bold 9px "Liberation Sans", sans-serif; }
.ax-x { fill: #9a2030; }
.ax-y { fill: #2a9a3a; }
.ax-z { fill: #1a2a6a; }
.scale-text { font: bold 7.600px "DejaVu Serif", serif; fill: #111; text-anchor: middle; }

.tooltip {
  position: absolute;
  left: 33px;
  top: 18px;
  width: 125px;
  height: 19px;
  border: 1px solid #222;
  background: #fff;
  color: #111;
  font-size: 11.500px;
  line-height: 16px;
  text-align: center;
  white-space: nowrap;
}
.ok-btn {
  position: absolute;
  left: 0;
  top: 40px;
  width: 19px;
  height: 20px;
  background: rgba(255, 255, 255, .25);
  color: #8c969d;
  font-size: 9.500px;
  line-height: 20px;
  text-align: center;
}

.autocursor {
  position: absolute;
  left: 288px;
  top: 7px;
  width: 414px;
  height: 27px;
  padding-left: 16px;
  border-radius: 14px;
  background: rgba(255, 255, 255, .16);
  display: flex;
  align-items: center;
  gap: 5px;
  color: #79838a;
  font-size: 9px;
}
.autocursor svg { width: 13px; height: 13px; }
.autocursor .caret { margin: 0 3px 0 0; border-top-color: #8d969c; }
.ac-globe { margin-left: 6px; }
.ac-wide { margin-left: 4px; }
.ac-xyz { font: 5.500px "Liberation Sans", sans-serif; fill: #6a7278; text-anchor: middle; }
.ac-active {
  width: 18px;
  height: 27px;
  display: flex;
  align-items: center;
  justify-content: center;
  background: rgba(140, 175, 210, .3);
  border: 1px solid rgba(120, 160, 200, .5);
}

.rail { position: absolute; right: 6px; top: 18px; width: 57px; }
.rail-top { position: absolute; left: 0; top: 0; display: flex; flex-direction: column; gap: 7px; }
.rail-main { display: flex; flex-direction: column; align-items: flex-end; gap: 6.200px; }
.mask {
  display: block;
  position: relative;
  width: 28px;
  height: 28px;
  border-radius: 50%;
  background: rgba(255, 255, 255, .15);
  border: 1px solid rgba(130, 140, 150, .16);
}
.mask svg { width: 26px; height: 26px; opacity: .65; }
.mask::after {
  content: "";
  position: absolute;
  left: 13px;
  top: -1px;
  width: 1px;
  height: 28px;
  background: rgba(255, 255, 255, .3);
  transform: rotate(45deg);
}

/* Manager and viewsheet tabs */
.bottom-tabs { height: 20px; display: flex; background: #fff; }
.mgr-tabs { width: 290px; display: flex; align-items: flex-end; padding-left: 5px; font-size: 8.6px; line-height: 18px; border-top: 1px solid #eee; }
.mgr-tabs span { margin-right: 11px; color: #555; }
.mgr-tabs .mgr-active { margin: 0 0 0 -5px; padding: 0 4px; width: 66px; height: 19px; background: #fff; border-right: 1px solid #ccc; border-bottom: 1px solid #ccc; border-left: 1px solid #ccc; white-space: nowrap; }
.sheet-tabs { flex: 1; display: flex; align-items: flex-end; font-size: 8.7px; border-top: 2px solid #eee; }
.sheet { width: 60px; height: 20px; margin-top: -2px; line-height: 19px; text-align: center; border: 1px solid #ccc; border-bottom: 0; background: #fff; }
.sheet-add { margin-left: 5px; line-height: 18px; }
.sheet-arrows { width: 22px; height: 10px; margin: 0 3px 4px auto; }

/* Status bar */
.status {
  height: 20px;
  background: #2b5797;
  color: #dfe8f2;
  display: flex;
  align-items: center;
  font-size: 9px;
  white-space: nowrap;
}
.status span { flex: none; }
.s-section { margin-left: 478px; width: 95px; }
.s-selected { width: 143px; }
.s-x { width: 16px; }
.s-xv { width: 62px; }
.s-y { width: 17px; }
.s-yv { width: 55px; }
.s-z { width: 16px; }
.s-zv { width: 53px; }
.s-3d { width: 21px; }
.s-cp { width: 80px; }
.s-tp { width: 59px; }
.s-wcs { width: 56px; }
.s-icons { display: flex; }
.s-icons span { width: 21px; height: 20px; display: flex; align-items: center; justify-content: center; }
.s-icons svg { width: 14px; height: 14px; }
.s-icons .s-on { background: #3f74b8; }

/* Taskbar */
.taskbar {
  height: 40px;
  position: relative;
  display: flex;
  align-items: center;
  background: linear-gradient(90deg, #deeaf6 0%, #e3ecf6 30%, #d2e0f5 55%, #dfe9f5 68%, #e8eff7 100%);
}
.task-apps { display: flex; align-items: center; gap: 16.800px; margin-left: 429px; }
.task-apps > svg { width: 20px; height: 20px; }
.task-active {
  width: 34px;
  height: 33px;
  margin-left: -7px;
  display: flex;
  align-items: center;
  justify-content: center;
  background: #eef3f9;
  border-radius: 4px;
  position: relative;
}
.task-active svg { width: 26px; height: 26px; }
.task-active::after {
  content: "";
  position: absolute;
  left: 10px;
  bottom: 1px;
  width: 14px;
  height: 3px;
  border-radius: 2px;
  background: #1d78c8;
}
.mc-m { font: italic 900 17px "Liberation Sans", sans-serif; fill: #b02438; text-anchor: middle; }
.mc-year { font: bold 6px "Liberation Serif", serif; fill: #222; text-anchor: middle; }
.dot { position: absolute; bottom: 1px; width: 5px; height: 2px; border-radius: 1px; background: #777; }
.dot-chrome { left: 656px; }
.dot-obs { left: 803px; }
.tray { margin-left: auto; display: flex; align-items: center; color: #222; }
.tray svg { width: 14px; height: 14px; }
.tray-cloud { margin-left: 6px; }
.tray-mic { margin-left: 9px; }
.tray-wifi { margin-left: 13px; }
.tray-vol { margin-left: 6px; }
.tray-bat { margin-left: 6px; }
.clock { width: 52px; margin-left: 8px; text-align: center; font-size: 9.500px; line-height: 14px; color: #333; }
.badge {
  width: 14px;
  height: 14px;
  margin: 0 16px 0 4px;
  border-radius: 50%;
  background: #1d78c8;
  color: #fff;
  font-size: 8px;
  line-height: 14px;
  text-align: center;
}
```
